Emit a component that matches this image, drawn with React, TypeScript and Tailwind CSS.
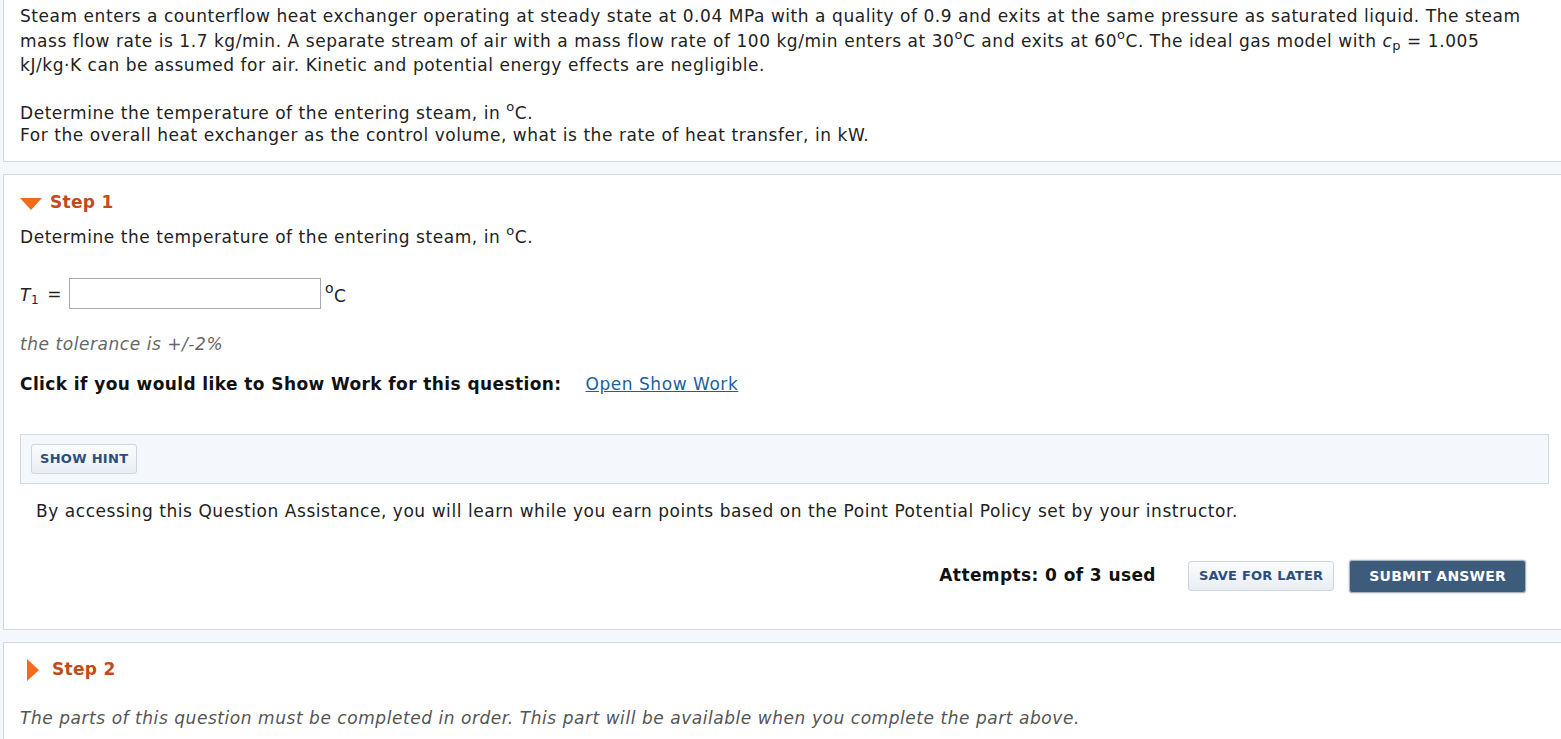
import React from "react";

const font = { fontFamily: '"DejaVu Sans", Verdana, sans-serif' };

function Deg({ size = "text-[13px]" }: { size?: string }) {
  return <sup className={`${size} relative -top-[0.6em]`}>o</sup>;
}

export default function App() {
  return (
    <div className="min-h-[739px] bg-[#f4f7fb] text-[#222] text-[17px] tracking-[0.55px]" style={font}>
      {/* Question panel */}
      <div className="ml-[3px] bg-white border-l border-b border-[#d2d9e1] pl-[16px] pt-[4px] pb-[15px]">
        <div className="leading-[24.5px] whitespace-nowrap">
          <div>Steam enters a counterflow heat exchanger operating at steady state at 0.04 MPa with a quality of 0.9 and exits at the same pressure as saturated liquid. The steam</div>
          <div className="h-[24.5px]">
            mass flow rate is 1.7 kg/min. A separate stream of air with a mass flow rate of 100 kg/min enters at 30<Deg />C and exits at 60<Deg />C. The ideal gas model with <i>c</i>
            <sub className="text-[13px]">p</sub> = 1.005
          </div>
          <div>kJ/kg·K can be assumed for air. Kinetic and potential energy effects are negligible.</div>
        </div>
        <div className="mt-[24px] leading-[22px]">
          <div className="h-[22px]">Determine the temperature of the entering steam, in <Deg />C.</div>
          <div>For the overall heat exchanger as the control volume, what is the rate of heat transfer, in kW.</div>
        </div>
      </div>

      {/* Step 1 panel */}
      <div className="mt-[12px] ml-[3px] bg-white border-l border-y border-[#d2d9e1] pl-[16px] pt-[16px] pb-[36px]">
        <div className="flex items-center gap-[8px] h-[24px]">
          <svg width="22" height="14" viewBox="0 0 22 14" className="mt-[2px]">
            <polygon points="0,1 22,1 11,13" fill="#f26b1d" />
          </svg>
          <span className="font-bold text-[#c14b1b] text-[17px] tracking-[0.3px]">Step 1</span>
        </div>
        <div className="mt-[11px] leading-[22px] h-[22px]">
          Determine the temperature of the entering steam, in <Deg />C.
        </div>
        <div className="mt-[30px] flex items-center h-[32px]">
          <span className="italic mt-[4px]">T<sub className="text-[12px] not-italic">1</sub></span>
          <span className="ml-[8px] mt-[2px]">=</span>
          <input className="ml-[7px] w-[252px] h-[31px] border border-[#a9a9a9] bg-white outline-none" />
          <span className="ml-[4px] mt-[6px]">
            <Deg size="text-[14px]" />C
          </span>
        </div>
        <div className="mt-[23px] italic text-[#666] leading-[22px]">the tolerance is +/-2%</div>
        <div className="mt-[18px] flex items-center leading-[22px]">
          <span className="font-bold text-[#111] tracking-[0.4px]">Click if you would like to Show Work for this question:</span>
          <a href="#" className="ml-[24px] text-[#1d5f9b] underline">Open Show Work</a>
        </div>
        <div className="mt-[39px] mr-[12px] h-[50px] bg-[#f4f7fb] border border-[#d2d9e1] flex items-center pl-[10px]">
          <button className="h-[30px] px-[8px] rounded-[3px] border border-[#cfd5dc] bg-gradient-to-b from-[#fbfcfd] to-[#e9eef3] text-[#2b4f7d] font-bold text-[13px] tracking-[0.3px]">
            SHOW HINT
          </button>
        </div>
        <div className="mt-[16px] pl-[16px] leading-[22px]">
          By accessing this Question Assistance, you will learn while you earn points based on the Point Potential Policy set by your instructor.
        </div>
        <div className="mt-[38px] flex items-center justify-end pr-[35px]">
          <span className="font-bold text-[#111] tracking-[0.4px]">Attempts: 0 of 3 used</span>
          <button className="ml-[32px] h-[30px] px-[10px] rounded-[3px] border border-[#cfd5dc] bg-gradient-to-b from-[#fbfcfd] to-[#e9eef3] text-[#2b4f7d] font-bold text-[13px] tracking-[0.2px]">
            SAVE FOR LATER
          </button>
          <button className="ml-[15px] h-[33px] px-[19px] rounded-[3px] border border-[#a8b4c2] bg-[#3d5b7b] text-white font-bold text-[14px] tracking-[0.2px] shadow-[0_0_2px_rgba(0,0,0,0.3)]">
            SUBMIT ANSWER
          </button>
        </div>
      </div>

      {/* Step 2 panel */}
      <div className="mt-[12px] ml-[3px] bg-white border-l border-t border-[#d2d9e1] pl-[16px] pt-[15px] pb-[14px]">
        <div className="flex items-center gap-[12px] h-[24px]">
          <svg width="14" height="22" viewBox="0 0 14 22" className="ml-[6px]">
            <polygon points="1,0 13,11 1,22" fill="#f26b1d" />
          </svg>
          <span className="font-bold text-[#c14b1b] text-[17px] tracking-[0.3px]">Step 2</span>
        </div>
        <div className="mt-[25px] italic text-[#555] leading-[22px]">
          The parts of this question must be completed in order. This part will be available when you complete the part above.
        </div>
      </div>
    </div>
  );
}
